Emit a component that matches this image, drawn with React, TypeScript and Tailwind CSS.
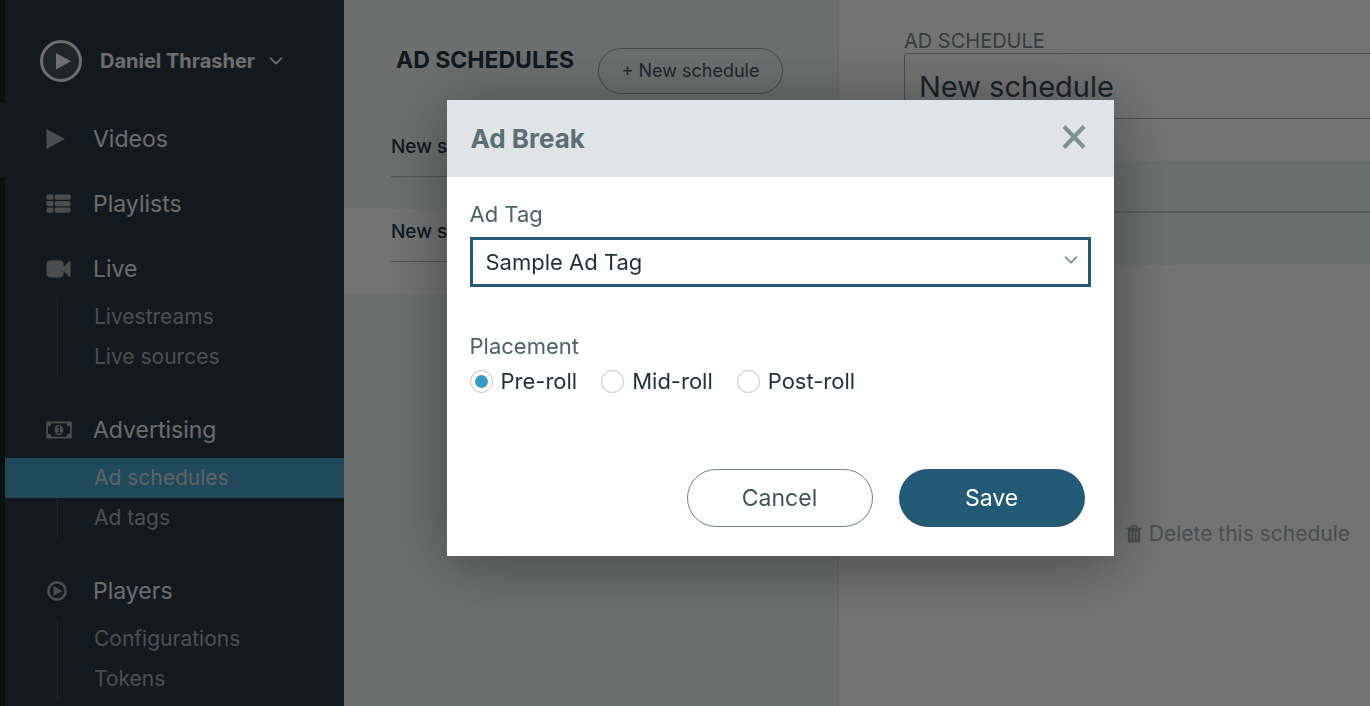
import { useState } from "react";

type NavChild = { label: string; active?: boolean };
type NavGroup = { label: string; icon: React.ReactNode; children?: NavChild[] };

const PlayIcon = () => (
  <svg viewBox="0 0 26 22" className="h-[22px] w-[26px]" fill="currentColor" aria-hidden="true">
    <path d="M0.5 1 L19 11 L0.5 21 Z" />
  </svg>
);

const ListIcon = () => (
  <svg viewBox="0 0 26 20" className="h-5 w-[26px]" fill="currentColor" aria-hidden="true">
    {[0.5, 7, 13.5].map((y) => (
      <g key={y}>
        <rect x="0.5" y={y} width="7" height="5.2" rx="1.4" />
        <rect x="8.700" y={y} width="15.800" height="5.2" rx="1.4" />
      </g>
    ))}
  </svg>
);

const CameraIcon = () => (
  <svg viewBox="0 0 26 18" className="h-[18px] w-[26px]" fill="currentColor" aria-hidden="true">
    <rect x="0.5" y="0.5" width="17" height="17" rx="4" />
    <path d="M16.5 8 L23 1.500 Q24.5 0.500 24.5 2 V16 Q24.500 17.500 23 16.500 L16.500 10 Z" />
  </svg>
);

const MoneyIcon = () => (
  <svg viewBox="0 0 26 18" className="h-[18px] w-[26px]" aria-hidden="true">
    <path
      fill="currentColor"
      fillRule="evenodd"
      d="M1.200 0.500 H24.800 Q25.800 0.500 25.800 1.500 V16.500 Q25.800 17.500 24.800 17.500 H1.200 Q0.200 17.500 0.200 16.500 V1.500 Q0.200 0.500 1.200 0.500 Z M5.500 2.200 Q5.200 5.300 2 5.600 V12.400 Q5.200 12.700 5.500 15.800 H20.500 Q20.800 12.700 24 12.400 V5.600 Q20.800 5.300 20.500 2.200 Z"
    />
    <ellipse cx="13" cy="9" rx="4.300" ry="5.300" fill="currentColor" />
    <path d="M11.500 6.700 L13.300 5.700 V11.700 M11.200 11.900 H15.200" fill="none" stroke="#2a3b46" strokeWidth="1.300" />
  </svg>
);

const CirclePlayIcon = () => (
  <svg viewBox="0 0 22 20" className="h-5 w-[22px]" aria-hidden="true">
    <circle cx="11" cy="10" r="8.600" fill="none" stroke="currentColor" strokeWidth="2.600" />
    <path d="M7.500 5 L16.500 10 L7.500 15 Z" fill="currentColor" />
  </svg>
);

const Chevron = ({ className }: { className: string }) => (
  <svg viewBox="0 0 14 8" className={className} fill="none" stroke="currentColor" strokeWidth="1.700" strokeLinecap="round" strokeLinejoin="round" aria-hidden="true">
    <path d="M1.500 1.200 L7 6.700 L12.500 1.200" />
  </svg>
);

const TrashIcon = () => (
  <svg viewBox="0 0 16 18" className="h-[18px] w-4" aria-hidden="true">
    <path d="M5 3 V1.800 Q5 0.800 6 0.800 H10 Q11 0.800 11 1.800 V3" fill="none" stroke="currentColor" strokeWidth="1.300" />
    <rect x="0.500" y="2.600" width="15" height="1.700" rx="0.600" fill="currentColor" />
    <path d="M1.800 4 H14.200 V16 Q14.200 17.500 12.700 17.500 H3.300 Q1.800 17.500 1.800 16 Z" fill="currentColor" />
    <path d="M5 6.500 V14.500 M8 6.500 V14.500 M11 6.500 V14.500" stroke="#fff" strokeWidth="1" />
  </svg>
);

const groups: NavGroup[] = [
  { label: "Videos", icon: <PlayIcon /> },
  { label: "Playlists", icon: <ListIcon /> },
  { label: "Live", icon: <CameraIcon />, children: [{ label: "Livestreams" }, { label: "Live sources" }] },
  {
    label: "Advertising",
    icon: <MoneyIcon />,
    children: [{ label: "Ad schedules", active: true }, { label: "Ad tags" }],
  },
  { label: "Players", icon: <CirclePlayIcon />, children: [{ label: "Configurations" }, { label: "Tokens" }] },
];

function Sidebar() {
  return (
    <div className="flex w-[344px] shrink-0 bg-[#2a3b46]">
      <div className="flex w-[5px] shrink-0 flex-col bg-[#1b2524]">
        <div className="mt-[103px] h-[74px] bg-[#2a3b46]" />
      </div>
      <div className="min-w-0 flex-1 pt-10">
        <button type="button" className="flex items-center pl-[35px] text-[#f4f4f4]">
          <svg viewBox="0 0 42 42" className="size-[42px]" aria-hidden="true">
            <circle cx="21" cy="21" r="19.500" fill="#47545a" stroke="currentColor" strokeWidth="3" />
            <path d="M16 13 L31 21.300 L16 29.600 Z" fill="currentColor" />
          </svg>
          <span className="ml-[18px] text-xl leading-6 font-bold">Daniel Thrasher</span>
          <Chevron className="ml-3.5 h-2 w-3.5" />
        </button>
        <nav className="mt-[29px] flex flex-col">
          {groups.map((g) => (
            <div key={g.label} className={g.children ? "mb-[25px]" : "mb-[9px]"}>
              <a href="#" className="flex h-14 items-center pl-[41px] text-[23px] text-[#efefef]">
                <span className="w-[47px] text-[#a6abae]">{g.icon}</span>
                {g.label}
              </a>
              {g.children && (
                <ul>
                  {g.children.map((c) => (
                    <li key={c.label} className={c.active ? "bg-[#47a3cb]" : ""}>
                      <a
                        href="#"
                        className={
                          c.active
                            ? "flex h-10 items-center pl-[89px] text-[21px] text-[#d6dcde]"
                            : "ml-[52px] flex h-10 items-center border-l border-[#46545a] pl-[36px] text-[21px] text-[#a9b0b3]"
                        }
                      >
                        {c.label}
                      </a>
                    </li>
                  ))}
                </ul>
              )}
            </div>
          ))}
        </nav>
      </div>
    </div>
  );
}

function ScheduleList() {
  return (
    <section className="w-[495px] shrink-0 border-r border-[#e2e5e5] bg-[#f2f6f5]">
      <div className="flex h-[124px] items-start pt-12 pl-[52px]">
        <h1 className="w-[202px] text-[23px] leading-6 font-bold text-[#263844]">AD SCHEDULES</h1>
        <button type="button" className="h-[46px] w-[185px] rounded-full border border-[#97a1a4] text-lg text-[#465860]">
          + New schedule
        </button>
      </div>
      <ul>
        <li className="h-[85px] px-[47px]">
          <div className="h-[53px] border-b border-[#a9b4b8] pt-3 text-[19px] leading-[22px] font-medium text-[#263844]">
            New schedule
          </div>
        </li>
        <li className="h-[85px] bg-white px-[47px]">
          <div className="h-[53px] border-b border-[#a9b4b8] pt-3 text-[19px] leading-[22px] font-medium text-[#263844]">
            New schedule
          </div>
        </li>
      </ul>
    </section>
  );
}

function ScheduleDetail() {
  return (
    <section className="flex min-w-0 flex-1 flex-col pt-[30px] pl-[65px]">
      <label htmlFor="schedule-name" className="text-xl leading-[23px] text-[#7b868a]">
        AD SCHEDULE
      </label>
      <input
        id="schedule-name"
        defaultValue="New schedule"
        className="h-[66px] w-full rounded-l-sm border border-r-0 border-[#a3afb3] bg-white pl-3.5 text-[29px] text-[#3c4f58]"
      />
      <div className="mt-[42px] h-[52px] border-b-2 border-[#c3cbce] bg-[#f2f6f5]" />
      <div className="h-[52px] bg-[#f2f6f5]" />
      <button type="button" className="mt-[257px] flex items-center gap-[7px] self-end pr-5 text-[21px] leading-6 text-[#a3abae]">
        <TrashIcon />
        Delete this schedule
      </button>
    </section>
  );
}

function AdBreakDialog() {
  const [placement, setPlacement] = useState("Pre-roll");
  return (
    <div role="dialog" aria-labelledby="dialog-title" className="w-full max-w-[667px] bg-white shadow-[0_6px_60px_rgba(0,0,0,0.4)]">
      <header className="flex h-[77px] items-center justify-between bg-[#e0e4e7] px-6">
        <h2 id="dialog-title" className="text-[26px] font-bold text-[#5b6e74]">
          Ad Break
        </h2>
        <button type="button" aria-label="Close" className="pr-1 pb-1 text-[#7f8f93]">
          <svg viewBox="0 0 24 24" className="size-6" fill="none" stroke="currentColor" strokeWidth="4" aria-hidden="true">
            <path d="M2 1.500 L22 22.500 M22 1.500 L2 22.500" />
          </svg>
        </button>
      </header>
      <form className="px-[23px] pt-[25px] pb-[29px]" onSubmit={(e) => e.preventDefault()}>
        <label htmlFor="ad-tag" className="block text-[22px] leading-6 text-[#4b626b]">
          Ad Tag
        </label>
        <div className="relative mt-[11px]">
          <select
            id="ad-tag"
            className="block h-[50px] w-full appearance-none border-[3px] border-[#245a75] bg-white px-[13px] text-[22px] text-[#1d303c] outline-none"
          >
            <option>Sample Ad Tag</option>
          </select>
          <Chevron className="pointer-events-none absolute top-[19px] right-[13px] h-2 w-3.5 text-[#7f8f93]" />
        </div>
        <fieldset className="mt-[47px]">
          <legend className="text-[22px] leading-6 text-[#4b626b]">Placement</legend>
          <div className="mt-[11px] flex gap-6">
            {["Pre-roll", "Mid-roll", "Post-roll"].map((p) => (
              <label key={p} className="flex items-center gap-2 text-[22px] leading-6 text-[#1d303c]">
                <input
                  type="radio"
                  name="placement"
                  checked={placement === p}
                  onChange={() => setPlacement(p)}
                  className="grid size-[23px] appearance-none place-content-center rounded-full border border-[#b9c3c8] before:size-[13px] before:rounded-full checked:before:bg-[#3b9bc5]"
                />
                {p}
              </label>
            ))}
          </div>
        </fieldset>
        <div className="mt-[76px] flex justify-end gap-[26px] pr-1.5">
          <button type="button" className="h-[58px] w-[186px] rounded-full border border-[#6f8288] text-[23px] text-[#3f545d]">
            Cancel
          </button>
          <button type="submit" className="h-[58px] w-[186px] rounded-full bg-[#235a75] text-[23px] text-white">
            Save
          </button>
        </div>
      </form>
    </div>
  );
}

export default function App() {
  return (
    <div className="h-screen overflow-hidden bg-white font-['Inter',sans-serif]">
      <div className="flex h-full overflow-hidden">
        <Sidebar />
        <ScheduleList />
        <ScheduleDetail />
      </div>
      <div className="fixed inset-0 flex items-start justify-center bg-black/55 pt-[100px] pl-[190px]">
        <AdBreakDialog />
      </div>
    </div>
  );
}
